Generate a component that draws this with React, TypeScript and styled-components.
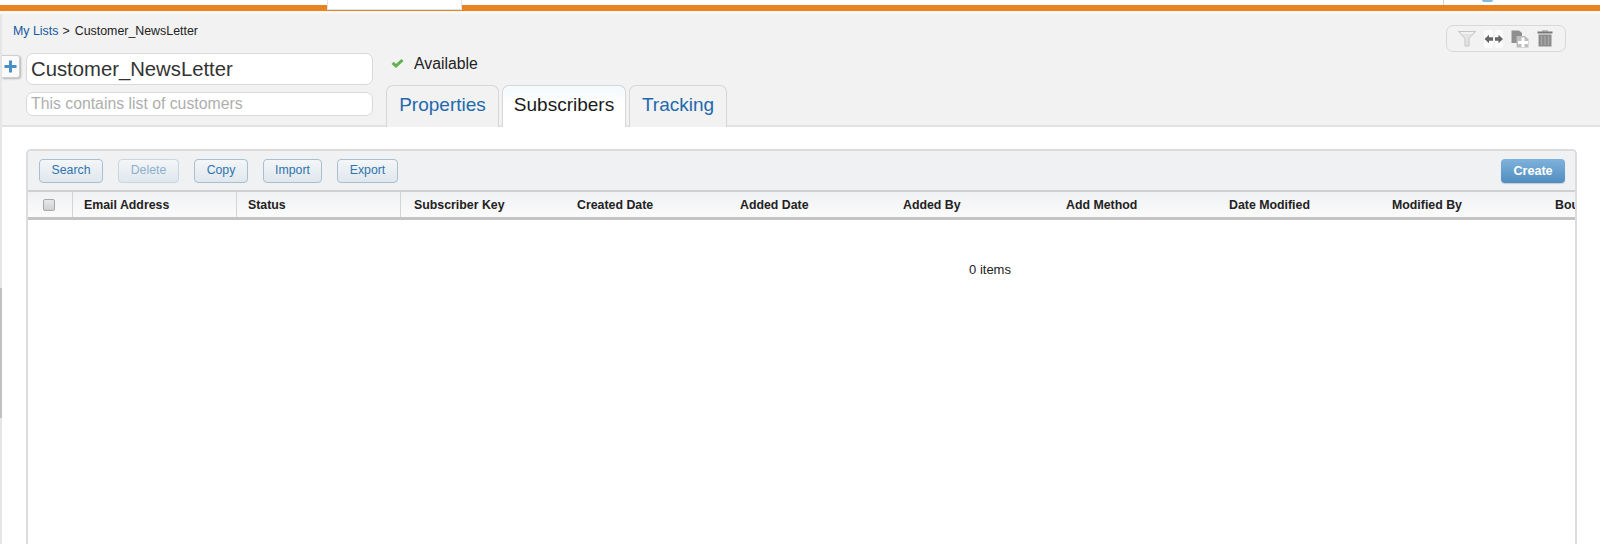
import React from "react";
import styled, { createGlobalStyle } from "styled-components";

const Global = createGlobalStyle`
  html, body { margin: 0; padding: 0; height: 100%; overflow: hidden; background: #fff; }
  body { font-family: "Liberation Sans", Arial, sans-serif; color: #222; }
  * { box-sizing: border-box; }
`;

const Page = styled.div`
  height: 544px;
  overflow: hidden;
  display: flex;
  flex-direction: column;
  position: relative;
`;

const TopBar = styled.div`
  height: 14px;
  flex: none;
  background: linear-gradient(#fff 0 5px, #e8831f 5px 11px, #f7f7f7 11px);
  display: flex;
  align-items: flex-start;
`;

const ActiveApp = styled.div`
  margin-left: 327px;
  width: 135px;
  height: 10px;
  background: #fff;
  border: 1px solid #dfe3ea;
  border-top: none;
`;

const Divider = styled.div`
  margin-left: 981px;
  width: 1px;
  height: 5px;
  background: #c9d3e2;
`;

const Blip = styled.div`
  margin-left: 38px;
  width: 11px;
  height: 2px;
  border-radius: 0 0 5px 5px;
  background: #7fbde0;
`;

const Body = styled.div`
  flex: 1;
  display: flex;
  min-height: 0;
`;

const Rail = styled.div`
  width: 2px;
  flex: none;
  background: linear-gradient(#e6e6e6 0 274px, #c0c0c0 274px 404px, #e6e6e6 404px);
`;

const Content = styled.div`
  flex: 1;
  min-width: 0;
  display: flex;
  flex-direction: column;
`;

const Header = styled.div`
  height: 113px;
  flex: none;
  background: #f2f2f2;
  border-bottom: 2px solid #e2e2e2;
  display: grid;
  grid-template-columns: 24px 347px 1fr auto;
  grid-template-rows: 39px 1fr;
`;

const Crumbs = styled.div`
  grid-column: 1 / 4;
  padding: 10px 0 0 11px;
  font-size: 12.4px;
  line-height: 14px;
  color: #222;
`;

const CrumbLink = styled.a`
  color: #14589f;
`;

const Sep = styled.span`
  margin: 0 5px 0 4px;
`;

const ActionsBox = styled.div`
  grid-column: 4;
  grid-row: 1 / 3;
  align-self: start;
  margin: 11px 34px 0 0;
  width: 120px;
  height: 27px;
  border: 1px solid #d8d8d8;
  border-radius: 7px;
  display: flex;
  align-items: center;
  padding-left: 11px;
  gap: 8px;
`;

const PlusCol = styled.div`
  grid-row: 2;
  grid-column: 1;
`;

const PlusButton = styled.button`
  margin-top: 2px;
  width: 18px;
  height: 23px;
  padding: 0;
  background: #fafafa;
  border: 1px solid #cfcfcf;
  border-left: none;
  border-radius: 0 3px 3px 0;
  box-shadow: 1px 1px 2px #b4b4b4;
  display: flex;
  align-items: center;
  justify-content: center;
`;

const NameCol = styled.div`
  grid-row: 2;
  grid-column: 2;
  display: flex;
  flex-direction: column;
  gap: 7px;
`;

const NameBox = styled.div`
  height: 32px;
  background: #fff;
  border: 1px solid #d9d9d9;
  border-radius: 7px;
  padding-left: 4px;
  font-size: 20.3px;
  line-height: 31px;
  color: #333;
`;

const DescBox = styled.div`
  height: 24px;
  background: #fff;
  border: 1px solid #d9d9d9;
  border-radius: 7px;
  padding-left: 4px;
  font-size: 15.8px;
  line-height: 21px;
  color: #aeaeae;
`;

const StatusCol = styled.div`
  grid-row: 2;
  grid-column: 3;
  padding-left: 13px;
  display: flex;
  flex-direction: column;
`;

const StatusRow = styled.div`
  height: 32px;
  padding: 0 0 11px 5px;
  display: flex;
  align-items: center;
  gap: 10px;
  font-size: 15.8px;
  color: #222;
`;

const Tabs = styled.div`
  display: flex;
  gap: 3px;
`;

const Tab = styled.div<{ $active?: boolean; $width: number }>`
  height: 42px;
  width: ${(p) => p.$width}px;
  text-align: center;
  border: 1px solid #d6d6d6;
  border-bottom: none;
  border-radius: 7px 7px 0 0;
  font-size: 19px;
  line-height: 38px;
  color: ${(p) => (p.$active ? "#1a1a1a" : "#1e69ad")};
  background: ${(p) => (p.$active ? "linear-gradient(#f3f9fd, #fff 45%)" : "#f2f2f2")};
  position: relative;
  z-index: 1;
`;

const Main = styled.div`
  flex: 1;
  min-height: 0;
  overflow: hidden;
  padding: 22px 23px 0 24px;
`;

const Panel = styled.div`
  height: 500px;
  border: 2px solid #dcdcdc;
  border-bottom: none;
  border-radius: 5px 5px 0 0;
  overflow: hidden;
`;

const Toolbar = styled.div`
  height: 39px;
  padding: 8px 10px 0 11px;
  background: #f0f1f3;
  display: flex;
  align-items: flex-start;
  gap: 15px;
`;

const ToolButton = styled.button<{ $disabled?: boolean; $width: number }>`
  height: 24px;
  width: ${(p) => p.$width}px;
  padding: 0 0 2px;
  border: 1px solid ${(p) => (p.$disabled ? "#c8d6e0" : "#a9bfce")};
  border-radius: 4px;
  background: linear-gradient(#f4f6f8, #dfe7ee);
  font-family: inherit;
  font-size: 12.3px;
  color: ${(p) => (p.$disabled ? "#8fb0cc" : "#2f74ad")};
`;

const CreateButton = styled.button`
  margin-left: auto;
  height: 24px;
  width: 64px;
  padding: 0;
  border: none;
  border-radius: 4px;
  background: linear-gradient(#7fb2dc, #4f8dbf);
  box-shadow: 0 1px 1px #c4ccd4;
  font-family: inherit;
  font-size: 12.6px;
  font-weight: bold;
  color: #fff;
`;

const Grid = styled.div`
  width: 1924px;
`;

const HeadRow = styled.div`
  height: 30px;
  display: flex;
  background: linear-gradient(#f0f1f3, #fbfbfc);
  border-top: 2px solid #cfd0d2;
  border-bottom: 3px solid #c4c4c4;
  white-space: nowrap;
`;

const CheckCell = styled.div`
  width: 45px;
  flex: none;
  display: flex;
  align-items: center;
  padding-left: 15px;
  border-right: 1px solid #d4d4d4;
`;

const FakeCheck = styled.div`
  width: 12px;
  height: 12px;
  background: linear-gradient(#e8e8e8, #d0d0d0);
  border: 1px solid #a8a8a8;
  border-radius: 2px;
`;

const HeadCell = styled.div<{ $divided?: boolean; $width?: number }>`
  width: ${(p) => p.$width ?? 163}px;
  flex: none;
  padding-left: ${(p) => (p.$divided ? 11 : 13)}px;
  font-size: 12.35px;
  font-weight: bold;
  line-height: 27px;
  color: #222;
  border-right: ${(p) => (p.$divided ? "1px solid #d4d4d4" : "none")};
`;

const EmptyNote = styled.div`
  padding-top: 42px;
  text-align: center;
  font-size: 13px;
  line-height: 16px;
  color: #222;
`;

const PlusIcon = () => (
  <svg width="13" height="13" viewBox="0 0 13 13">
    <path d="M5 0.5h3v4.5h4.5v3H8v4.5H5V8H0.5V5H5z" fill="#4a8fc6" />
  </svg>
);

const CheckIcon = () => (
  <svg width="13" height="11" viewBox="0 0 13 11">
    <path d="M0.5 6 L2.7 3.8 L5 6 L10.4 1 L12.6 3.1 L5 10 Z" fill="#62b350" />
  </svg>
);

const FunnelIcon = () => (
  <svg width="18" height="16" viewBox="0 0 18 16">
    <path d="M0.5 0.5h17L11 7.5V15H7V7.5z" fill="#e4e4e4" stroke="#c4c4c4" />
    <path d="M3 2h12" stroke="#f6f6f6" strokeWidth="1.5" />
  </svg>
);

const ArrowsIcon = () => (
  <svg width="19" height="18" viewBox="0 0 19 18">
    <rect x="0" y="0" width="9" height="18" rx="2" fill="#fcfcfc" />
    <rect x="11" y="0" width="8" height="18" rx="2" fill="#fcfcfc" />
    <path d="M0.5 9 L5 4.8V7.3H9V10.7H5V13.2Z" fill="#666" />
    <path d="M19 9 L14.5 4.8V7.3H11V10.7H14.5V13.2Z" fill="#666" />
  </svg>
);

const CopyPlusIcon = () => (
  <svg width="18" height="18" viewBox="0 0 18 18">
    <path d="M0.5 0.5H8L11 3V13H0.5Z" fill="#8f8f8f" />
    <path d="M5.5 6H14L17.5 9V17.5H5.5Z" fill="#bdbdbd" />
    <path d="M10.5 7.5h3v3.5H17v3h-3.5V17h-3v-3H7v-3h3.5z" fill="#fff" />
  </svg>
);

const TrashIcon = () => (
  <svg width="16" height="17" viewBox="0 0 16 17">
    <path d="M0.5 1.5H15.5V3.5H0.5Z" fill="#777" />
    <path d="M5 1.5V0.5H11V1.5Z" fill="#888" />
    <path d="M1.5 4.5H14.5V16.5H1.5Z" fill="#8c8c8c" />
    <path d="M4.5 6V15M8 6V15M11.5 6V15" stroke="#a9a9a9" strokeWidth="1.2" />
  </svg>
);

const buttons: { label: string; width: number; disabled?: boolean }[] = [
  { label: "Search", width: 64 },
  { label: "Delete", width: 61, disabled: true },
  { label: "Copy", width: 54 },
  { label: "Import", width: 59 },
  { label: "Export", width: 61 },
];

const columns = [
  "Subscriber Key",
  "Created Date",
  "Added Date",
  "Added By",
  "Add Method",
  "Date Modified",
  "Modified By",
  "Bounce Count",
];

export default function App() {
  return (
    <Page>
      <Global />
      <TopBar>
        <ActiveApp />
        <Divider />
        <Blip />
      </TopBar>
      <Body>
        <Rail />
        <Content>
          <Header>
            <Crumbs>
              <CrumbLink>My Lists</CrumbLink>
              <Sep>&gt;</Sep>Customer_NewsLetter
            </Crumbs>
            <ActionsBox>
              <FunnelIcon />
              <ArrowsIcon />
              <CopyPlusIcon />
              <TrashIcon />
            </ActionsBox>
            <PlusCol>
              <PlusButton>
                <PlusIcon />
              </PlusButton>
            </PlusCol>
            <NameCol>
              <NameBox>Customer_NewsLetter</NameBox>
              <DescBox>This contains list of customers</DescBox>
            </NameCol>
            <StatusCol>
              <StatusRow>
                <CheckIcon />
                Available
              </StatusRow>
              <Tabs>
                <Tab $width={113}>Properties</Tab>
                <Tab $active $width={124}>Subscribers</Tab>
                <Tab $width={98}>Tracking</Tab>
              </Tabs>
            </StatusCol>
          </Header>
          <Main>
            <Panel>
              <Toolbar>
                {buttons.map((b) => (
                  <ToolButton key={b.label} $disabled={b.disabled} $width={b.width}>
                    {b.label}
                  </ToolButton>
                ))}
                <CreateButton>Create</CreateButton>
              </Toolbar>
              <Grid>
                <HeadRow>
                  <CheckCell>
                    <FakeCheck />
                  </CheckCell>
                  <HeadCell $divided $width={164}>Email Address</HeadCell>
                  <HeadCell $divided $width={164}>Status</HeadCell>
                  {columns.map((c) => (
                    <HeadCell key={c}>{c}</HeadCell>
                  ))}
                </HeadRow>
                <EmptyNote>0 items</EmptyNote>
              </Grid>
            </Panel>
          </Main>
        </Content>
      </Body>
    </Page>
  );
}
